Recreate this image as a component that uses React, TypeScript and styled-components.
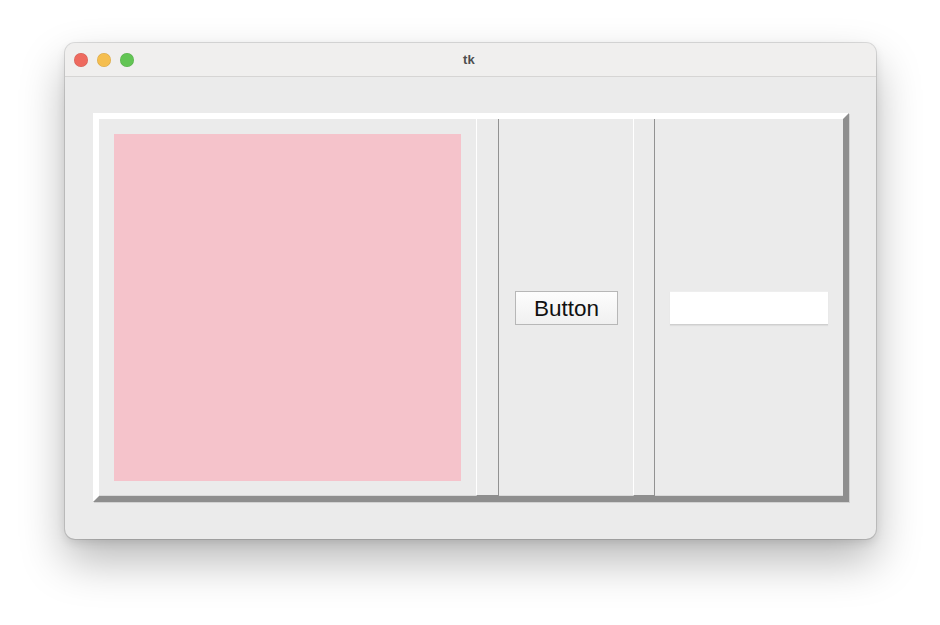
import React from "react";
import styled, { createGlobalStyle } from "styled-components";

const GlobalStyle = createGlobalStyle`
  html, body {
    margin: 0;
    padding: 0;
    background: #ffffff;
  }
  body {
    font-family: "Liberation Sans", Arial, sans-serif;
  }
`;

const Page = styled.div`
  width: 940px;
  height: 625px;
  padding: 43px 0 0 65px;
  box-sizing: border-box;
`;

const Window = styled.div`
  width: 811px;
  height: 496px;
  border-radius: 10px;
  overflow: hidden;
  background: #ebebeb;
  box-shadow: 0 0 0 1px rgba(0, 0, 0, 0.12), 0 22px 45px rgba(0, 0, 0, 0.28),
    0 4px 10px rgba(0, 0, 0, 0.1);
  display: flex;
  flex-direction: column;
`;

const TitleBar = styled.div`
  height: 34px;
  flex: none;
  box-sizing: border-box;
  background: #f0efee;
  border-bottom: 1px solid #d6d5d4;
  display: grid;
  grid-template-columns: 1fr auto 1fr;
  align-items: center;
  padding: 0 9px;
`;

const Lights = styled.div`
  display: flex;
  gap: 9px;
`;

const Light = styled.span<{ $color: string }>`
  width: 14px;
  height: 14px;
  border-radius: 50%;
  background: ${(p) => p.$color};
  box-shadow: inset 0 0 0 0.5px rgba(0, 0, 0, 0.12);
`;

const Title = styled.div`
  font-size: 13px;
  font-weight: bold;
  color: #4e4e4e;
  letter-spacing: 0.2px;
  margin-right: 3px;
`;

const Body = styled.div`
  flex: 1;
  padding: 36px 27px 36px 28px;
`;

const Paned = styled.div`
  display: flex;
  width: 756px;
  height: 389px;
  box-sizing: border-box;
  border: 6px solid;
  border-color: #ffffff #8e8e8e #8e8e8e #ffffff;
  box-shadow: 1px 1px 0 #d2d2d2;
  background: #ebebeb;
`;

const Pane = styled.div<{ $w: number }>`
  width: ${(p) => p.$w}px;
  flex: none;
  display: flex;
  align-items: center;
  justify-content: center;
  background: #ebebeb;
  box-shadow: inset 0 -1px 0 #d9d9d9;
`;

const Canvas = styled.div`
  width: 347px;
  height: 347px;
  background: #f5c3cb;
`;

const Sash = styled.div<{ $w: number }>`
  width: ${(p) => p.$w}px;
  flex: none;
  box-sizing: border-box;
  background: #ebebeb;
  border-left: 1px solid #ffffff;
  border-right: 1.5px solid #929292;
  border-bottom: 1px solid #8e8e8e;
`;

const Button = styled.button`
  width: 103px;
  height: 34px;
  box-sizing: border-box;
  margin-left: 1px;
  border: 1px solid #b7b7b7;
  border-radius: 0;
  background: linear-gradient(#fdfdfd, #f0f0f0);
  font-family: "Liberation Sans", Arial, sans-serif;
  font-size: 22.5px;
  color: #111111;
  padding: 3px 0 0;
  line-height: 1;
`;

const Entry = styled.input`
  width: 158px;
  height: 34px;
  box-sizing: border-box;
  border: none;
  border-top: 1px solid #eeeeee;
  border-bottom: 1px solid #cfcfcf;
  background: #ffffff;
  box-shadow: 0 1px 1px rgba(0, 0, 0, 0.06);
  outline: none;
  padding: 0 4px;
  font-size: 14px;
`;

export default function App() {
  return (
    <Page>
      <GlobalStyle />
      <Window>
        <TitleBar>
          <Lights>
            <Light $color="#ee6a5f" />
            <Light $color="#f5be4f" />
            <Light $color="#62c554" />
          </Lights>
          <Title>tk</Title>
          <div />
        </TitleBar>
        <Body>
          <Paned>
            <Pane $w={377}>
              <Canvas />
            </Pane>
            <Sash $w={23} />
            <Pane $w={134}>
              <Button>Button</Button>
            </Pane>
            <Sash $w={22} />
            <Pane $w={188}>
              <Entry />
            </Pane>
          </Paned>
        </Body>
      </Window>
    </Page>
  );
}
